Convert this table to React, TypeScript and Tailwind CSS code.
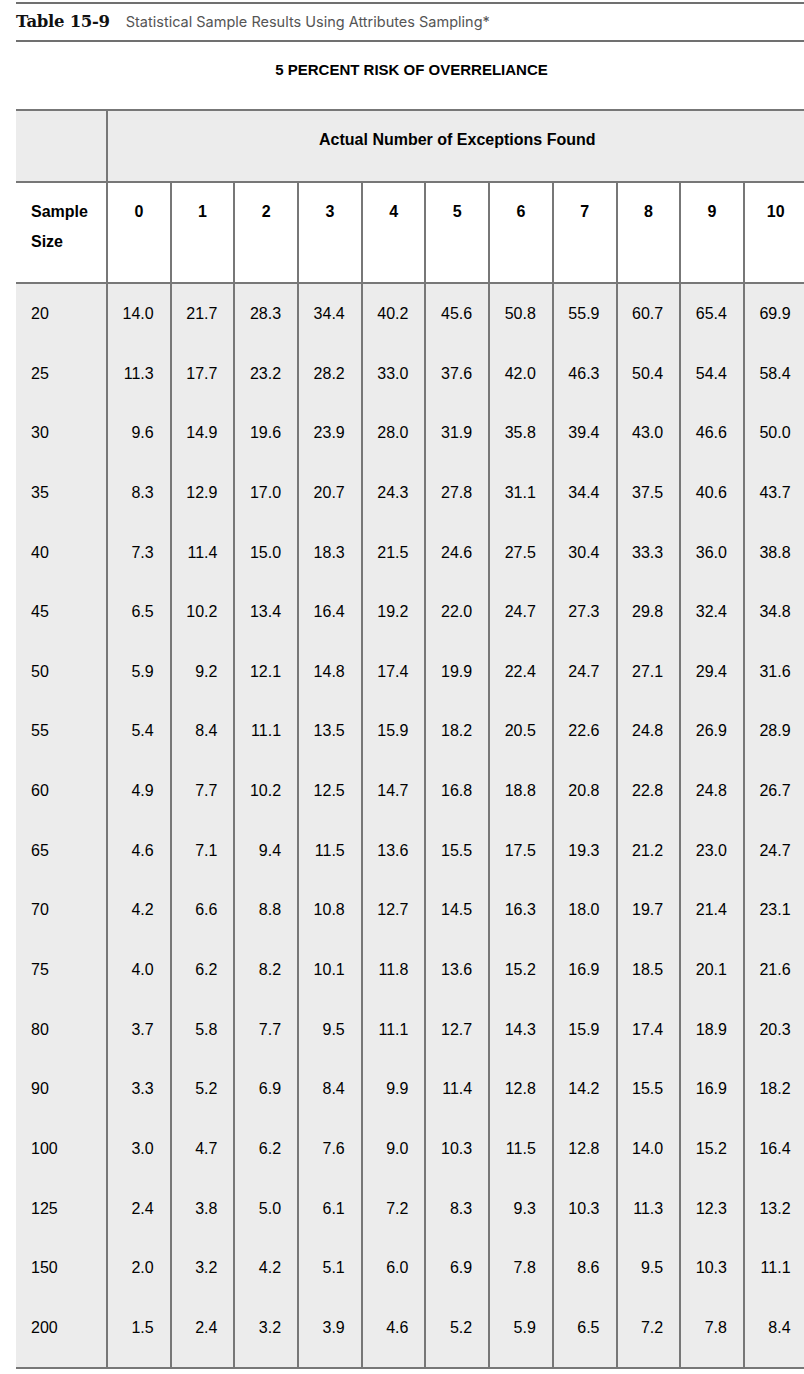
const rows: [string, string[]][] = [
  ["20", ["14.0", "21.7", "28.3", "34.4", "40.2", "45.6", "50.8", "55.9", "60.7", "65.4", "69.9"]],
  ["25", ["11.3", "17.7", "23.2", "28.2", "33.0", "37.6", "42.0", "46.3", "50.4", "54.4", "58.4"]],
  ["30", ["9.6", "14.9", "19.6", "23.9", "28.0", "31.9", "35.8", "39.4", "43.0", "46.6", "50.0"]],
  ["35", ["8.3", "12.9", "17.0", "20.7", "24.3", "27.8", "31.1", "34.4", "37.5", "40.6", "43.7"]],
  ["40", ["7.3", "11.4", "15.0", "18.3", "21.5", "24.6", "27.5", "30.4", "33.3", "36.0", "38.8"]],
  ["45", ["6.5", "10.2", "13.4", "16.4", "19.2", "22.0", "24.7", "27.3", "29.8", "32.4", "34.8"]],
  ["50", ["5.9", "9.2", "12.1", "14.8", "17.4", "19.9", "22.4", "24.7", "27.1", "29.4", "31.6"]],
  ["55", ["5.4", "8.4", "11.1", "13.5", "15.9", "18.2", "20.5", "22.6", "24.8", "26.9", "28.9"]],
  ["60", ["4.9", "7.7", "10.2", "12.5", "14.7", "16.8", "18.8", "20.8", "22.8", "24.8", "26.7"]],
  ["65", ["4.6", "7.1", "9.4", "11.5", "13.6", "15.5", "17.5", "19.3", "21.2", "23.0", "24.7"]],
  ["70", ["4.2", "6.6", "8.8", "10.8", "12.7", "14.5", "16.3", "18.0", "19.7", "21.4", "23.1"]],
  ["75", ["4.0", "6.2", "8.2", "10.1", "11.8", "13.6", "15.2", "16.9", "18.5", "20.1", "21.6"]],
  ["80", ["3.7", "5.8", "7.7", "9.5", "11.1", "12.7", "14.3", "15.9", "17.4", "18.9", "20.3"]],
  ["90", ["3.3", "5.2", "6.9", "8.4", "9.9", "11.4", "12.8", "14.2", "15.5", "16.9", "18.2"]],
  ["100", ["3.0", "4.7", "6.2", "7.6", "9.0", "10.3", "11.5", "12.8", "14.0", "15.2", "16.4"]],
  ["125", ["2.4", "3.8", "5.0", "6.1", "7.2", "8.3", "9.3", "10.3", "11.3", "12.3", "13.2"]],
  ["150", ["2.0", "3.2", "4.2", "5.1", "6.0", "6.9", "7.8", "8.6", "9.5", "10.3", "11.1"]],
  ["200", ["1.5", "2.4", "3.2", "3.9", "4.6", "5.2", "5.9", "6.5", "7.2", "7.8", "8.4"]],
];

const cols = ["0", "1", "2", "3", "4", "5", "6", "7", "8", "9", "10"];

const grid = "grid grid-cols-[90px_repeat(11,63.7px)]";

export default function App() {
  return (
    <div className="w-[804px] h-[1374px] overflow-hidden bg-white pl-4 text-black font-['Liberation_Sans',Arial,sans-serif]">
      <div className="w-[800px] mt-[2px] border-t-2 border-b-2 border-[#707070] h-[40px] flex items-center gap-4">
        <span className="font-['DejaVu_Serif',serif] font-bold text-[16.5px] text-[#111] tracking-[-0.3px]">Table 15-9</span>
        <span className="font-['Inter',sans-serif] text-[14.5px] text-[#555]">
          Statistical Sample Results Using Attributes Sampling*
        </span>
      </div>

      <div className="w-[791px] pt-[18px] pb-[29px] text-center text-[15px] leading-5 font-bold">
        5 PERCENT RISK OF OVERRELIANCE
      </div>

      <div className="w-[791px] border-t-2 border-b-2 border-[#777]">
        {/* header row 1 */}
        <div className={`${grid} h-[70px] bg-[#ececec]`}>
          <div />
          <div className="col-span-11 border-l-2 border-[#777] pt-[14px] leading-[30px] text-center text-[16px] font-bold">
            Actual Number of Exceptions Found
          </div>
        </div>

        {/* header row 2 */}
        <div className={`${grid} h-[101px] border-t-2 border-[#777] bg-white text-[16px] font-bold`}>
          <div className="pl-[15px] pt-[14px] leading-[30px]">
            Sample
            <br />
            Size
          </div>
          {cols.map((c) => (
            <div key={c} className="border-l-2 border-[#777] pt-[14px] leading-[30px] text-center">
              {c}
            </div>
          ))}
        </div>

        {/* body */}
        <div className="border-t-2 border-[#777] bg-[#ececec] text-[16px]">
          {rows.map(([size, vals], i) => (
            <div
              key={size}
              className={`${grid} ${i === rows.length - 1 ? "h-[69.5px]" : "h-[59.65px]"}`}
            >
              <div className="pl-[15px] pt-[20px] leading-5">{size}</div>
              {vals.map((v, j) => (
                <div key={j} className="border-l-2 border-[#777] pt-[20px] pr-4 leading-5 text-right">
                  {v}
                </div>
              ))}
            </div>
          ))}
        </div>
      </div>
    </div>
  );
}
